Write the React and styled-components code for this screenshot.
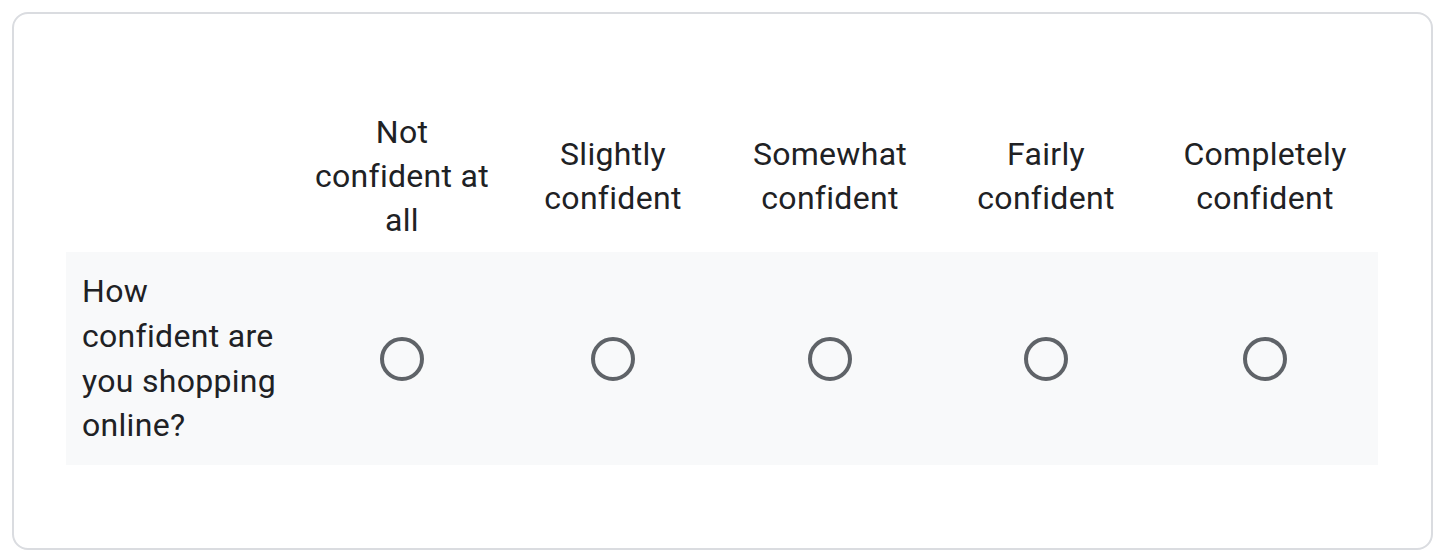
import React from "react";
import styled, { createGlobalStyle } from "styled-components";

const GlobalStyle = createGlobalStyle`
  html, body {
    margin: 0;
    padding: 0;
    background: #ffffff;
  }
  body {
    padding: 12px 10px 10px 12px;
    font-family: Roboto, "Liberation Sans", Arial, sans-serif;
    color: #202124;
  }
`;

const COLUMNS = "232px 208px 214px 220px 212px 226px";

const Card = styled.div`
  box-sizing: border-box;
  width: 1421px;
  height: 538px;
  border: 2px solid #dadce0;
  border-radius: 16px;
  padding: 86px 53px 83px 52px;
  background: #ffffff;
`;

const Grid = styled.div`
  display: grid;
  grid-template-columns: ${COLUMNS};
  width: 1312px;
`;

const HeaderRow = styled(Grid)`
  align-items: center;
`;

const HeaderCell = styled.div`
  box-sizing: border-box;
  padding: 10px 12px;
  font-size: 32px;
  line-height: 44px;
  letter-spacing: 0.3px;
  text-align: center;
  color: #202124;
`;

const Row = styled(Grid)`
  background: #f8f9fa;
  align-items: center;
`;

const Question = styled.div`
  box-sizing: border-box;
  padding: 17px 14px 17px 16px;
  font-size: 32px;
  line-height: 1.4;
  letter-spacing: 0.3px;
  color: #202124;
`;

const RadioCell = styled.label`
  display: flex;
  justify-content: center;
  align-items: center;
`;

const Radio = styled.input`
  appearance: none;
  -webkit-appearance: none;
  box-sizing: border-box;
  margin: 0;
  width: 44px;
  height: 44px;
  border: 4px solid #5f6368;
  border-radius: 50%;
  background: transparent;
  cursor: pointer;
`;

const options = [
  "Not confident at all",
  "Slightly confident",
  "Somewhat confident",
  "Fairly confident",
  "Completely confident",
];

export default function App() {
  return (
    <>
      <GlobalStyle />
      <Card>
        <HeaderRow>
          <HeaderCell />
          {options.map((o) => (
            <HeaderCell key={o}>{o}</HeaderCell>
          ))}
        </HeaderRow>
        <Row>
          <Question>How confident are you shopping online?</Question>
          {options.map((o) => (
            <RadioCell key={o}>
              <Radio type="radio" name="confidence" aria-label={o} />
            </RadioCell>
          ))}
        </Row>
      </Card>
    </>
  );
}
